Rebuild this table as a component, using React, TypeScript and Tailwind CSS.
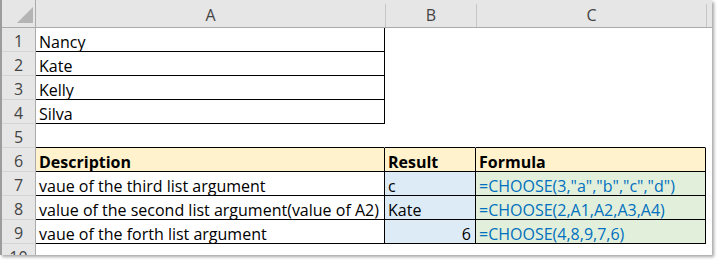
import React from 'react';

type Cell = {
  text?: string;
  bold?: boolean;
  right?: boolean;
  fill?: string;
  color?: string;
  bottom?: boolean;
  rightEdge?: boolean;
};

type Row = { n: number; a: Cell; b: Cell; c: Cell };

const rows: Row[] = [
  { n: 1, a: { text: 'Nancy', bottom: true, rightEdge: true }, b: {}, c: {} },
  { n: 2, a: { text: 'Kate', bottom: true, rightEdge: true }, b: {}, c: {} },
  { n: 3, a: { text: 'Kelly', bottom: true, rightEdge: true }, b: {}, c: {} },
  { n: 4, a: { text: 'Silva', bottom: true, rightEdge: true }, b: {}, c: {} },
  { n: 5, a: { bottom: true }, b: { bottom: true }, c: { bottom: true } },
  {
    n: 6,
    a: { text: 'Description', bold: true, fill: 'bg-[#fff2cc]', bottom: true, rightEdge: true },
    b: { text: 'Result', bold: true, fill: 'bg-[#fff2cc]', bottom: true, rightEdge: true },
    c: { text: 'Formula', bold: true, fill: 'bg-[#fff2cc]', bottom: true, rightEdge: true },
  },
  {
    n: 7,
    a: { text: 'vaue of the third list argument', bottom: true, rightEdge: true },
    b: { text: 'c', fill: 'bg-[#ddebf7]', bottom: true, rightEdge: true },
    c: { text: '=CHOOSE(3,"a","b","c","d")', fill: 'bg-[#e2efda]', color: 'text-[#0070c0]', bottom: true, rightEdge: true },
  },
  {
    n: 8,
    a: { text: 'value of the second list argument(value of A2)', bottom: true, rightEdge: true },
    b: { text: 'Kate', fill: 'bg-[#ddebf7]', bottom: true, rightEdge: true },
    c: { text: '=CHOOSE(2,A1,A2,A3,A4)', fill: 'bg-[#e2efda]', color: 'text-[#0070c0]', bottom: true, rightEdge: true },
  },
  {
    n: 9,
    a: { text: 'vaue of the forth list argument', bottom: true, rightEdge: true },
    b: { text: '6', right: true, fill: 'bg-[#ddebf7]', bottom: true, rightEdge: true },
    c: { text: '=CHOOSE(4,8,9,7,6)', fill: 'bg-[#e2efda]', color: 'text-[#0070c0]', bottom: true, rightEdge: true },
  },
  { n: 10, a: {}, b: {}, c: {} },
];

function DataCell({ cell, width }: { cell: Cell; width: string }) {
  return (
    <div
      className={[
        'flex h-6 shrink-0 items-end overflow-visible whitespace-nowrap border-b border-r pb-[1px] pl-[3px] pr-[4px]',
        width,
        cell.fill ?? 'bg-white',
        cell.bottom ? 'border-b-black' : 'border-b-transparent',
        cell.rightEdge ? 'border-r-black' : 'border-r-transparent',
        cell.right ? 'justify-end' : 'justify-start',
        cell.bold ? 'font-bold' : 'font-normal',
        cell.color ?? 'text-black',
      ].join(' ')}
    >
      {cell.text}
    </div>
  );
}

export default function App() {
  return (
    <div className="h-[260px] w-[717px] bg-white" style={{ fontFamily: '"Open Sans", "Liberation Sans", sans-serif' }}>
      <div className="relative h-[255px] w-[712px] overflow-hidden border-l-2 border-l-[#9c9c9c] bg-white text-[16px] leading-none shadow-[2px_2px_3px_rgba(0,0,0,0.35)]">
        {/* column header */}
        <div className="flex h-[28px] border-b border-b-[#ababab] bg-[#e6e6e6] text-[#444]">
          <div className="relative w-[34px] shrink-0 border-r border-r-[#ababab]">
            <div className="absolute left-[15px] top-[7px] h-0 w-0 border-b-[16px] border-l-[16px] border-b-[#b4b4b4] border-l-transparent" />
          </div>
          <div className="flex w-[349px] shrink-0 items-end justify-center pb-[4px]">
            <span>A</span>
          </div>
          <div className="mt-[4px] w-px bg-[#c6c6c6]" />
          <div className="flex w-[90px] shrink-0 items-end justify-center pb-[4px]">
            <span>B</span>
          </div>
          <div className="mt-[4px] w-px bg-[#c6c6c6]" />
          <div className="flex w-[229px] shrink-0 items-end justify-center pb-[4px]">
            <span>C</span>
          </div>
          <div className="mt-[4px] w-px bg-[#c6c6c6]" />
          <div className="flex-1" />
        </div>

        {rows.map((r) => (
          <div key={r.n} className="flex h-6">
            <div className="flex h-6 w-[34px] shrink-0 items-end justify-center border-b border-r border-b-[#d4d4d4] border-r-[#ababab] bg-[#e6e6e6] pb-[2px] text-[#444]">
              {r.n}
            </div>
            <DataCell cell={r.a} width="w-[349px]" />
            <DataCell cell={r.b} width="w-[91px]" />
            <DataCell cell={r.c} width="w-[230px]" />
            <div className="flex-1 bg-white" />
          </div>
        ))}
      </div>
    </div>
  );
}
